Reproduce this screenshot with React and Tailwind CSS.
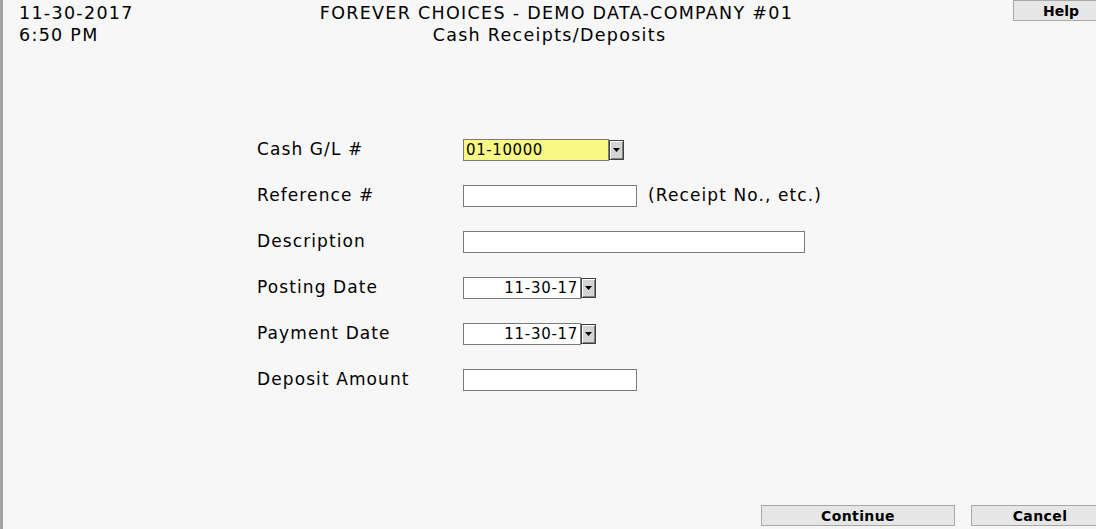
import React from 'react'

const font = { fontFamily: '"DejaVu Sans", Verdana, sans-serif' }

function Arrow() {
  return (
    <span className="flex h-[20px] w-[15px] items-center justify-center border border-[#404040] bg-[#d4d4d4] shadow-[inset_1px_1px_0_#ffffff,inset_-1px_-1px_0_#808080]">
      <svg width="7" height="4" viewBox="0 0 7 4">
        <path d="M0 0h7L3.5 4z" fill="#000" />
      </svg>
    </span>
  )
}

function Row({ label, children }) {
  return (
    <div className="flex h-[46px] items-center">
      <div className="w-[206px] text-[17px] tracking-[1.1px] text-black">{label}</div>
      <div className="flex items-center">{children}</div>
    </div>
  )
}

export default function App() {
  return (
    <div
      className="relative flex h-[529px] w-full flex-col overflow-hidden border-l-[3px] border-[#a3a3a3] bg-[#f7f7f7] text-black"
      style={font}
    >
      {/* Header */}
      <header className="grid grid-cols-[1fr_auto_1fr]">
        <div className="pl-[16px] pt-[2px] text-[17.5px] leading-[22px] tracking-[1.3px]">
          <div>11-30-2017</div>
          <div>6:50 PM</div>
        </div>
        <div className="pt-[2px] text-center text-[17.5px] leading-[22px] tracking-[1.3px]">
          <div className="pl-[14px]">FOREVER CHOICES - DEMO DATA-COMPANY #01</div>
          <div>Cash Receipts/Deposits</div>
        </div>
        <div className="flex justify-end">
          <button className="mr-[-13px] h-[21px] w-[96px] shrink-0 border border-[#a8a8a8] bg-[#e6e6e6] text-[14px] font-bold">
            Help
          </button>
        </div>
      </header>

      {/* Form */}
      <main className="mt-[81px] pl-[254px]">
        <Row label="Cash G/L #">
          <div className="flex h-[22px] w-[146px] items-center border border-[#7a7a7a] bg-[#f8f884] pl-[2px] text-[15px] tracking-[0.6px]">
            01-10000
          </div>
          <Arrow />
        </Row>
        <Row label="Reference #">
          <div className="h-[22px] w-[174px] border border-[#7a7a7a] bg-white" />
          <span className="ml-[11px] text-[17px] tracking-[1.1px]">(Receipt No., etc.)</span>
        </Row>
        <Row label="Description">
          <div className="h-[22px] w-[342px] border border-[#7a7a7a] bg-white" />
        </Row>
        <Row label="Posting Date">
          <div className="flex h-[22px] w-[118px] items-center justify-end border border-[#7a7a7a] bg-white pr-[2px] text-[15px] tracking-[0.7px]">
            11-30-17
          </div>
          <Arrow />
        </Row>
        <Row label="Payment Date">
          <div className="flex h-[22px] w-[118px] items-center justify-end border border-[#7a7a7a] bg-white pr-[2px] text-[15px] tracking-[0.7px]">
            11-30-17
          </div>
          <Arrow />
        </Row>
        <Row label="Deposit Amount">
          <div className="h-[22px] w-[174px] border border-[#7a7a7a] bg-white" />
        </Row>
      </main>

      {/* Footer buttons */}
      <footer className="mt-auto mb-[3px] flex justify-end gap-[16px]">
        <button className="h-[21px] w-[194px] shrink-0 border border-[#a8a8a8] bg-[#e6e6e6] text-[14px] font-bold tracking-[0.4px]">
          Continue
        </button>
        <button className="mr-[-13px] h-[21px] w-[138px] shrink-0 border border-[#a8a8a8] bg-[#e6e6e6] text-[14px] font-bold tracking-[0.4px]">
          Cancel
        </button>
      </footer>
    </div>
  )
}
